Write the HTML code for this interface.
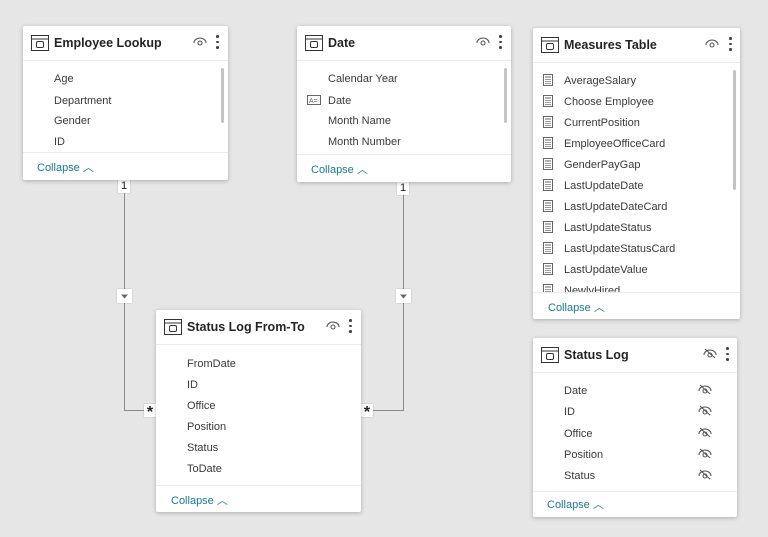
<!DOCTYPE html>
<html><head><meta charset="utf-8"><style>
body{margin:0;width:768px;height:537px;background:#e6e6e6;font-family:"Liberation Sans",sans-serif;position:relative;overflow:hidden}
.card{position:absolute;background:#fff;box-shadow:0 1px 4px rgba(0,0,0,.25);border-radius:2px}
.hd{position:absolute;left:0;right:0;top:0;height:34px;border-bottom:1px solid #ececec}
.ti{position:absolute;left:31px;top:10px;font-size:12.5px;font-weight:bold;color:#252423}
.ic{position:absolute;left:8px;top:9px}
.eye{position:absolute;top:11px}
.dots{position:absolute;top:9px;width:3px}
.dots i{display:block;width:2.5px;height:2.5px;background:#444;border-radius:50%;margin-bottom:3px}
.r{position:absolute;font-size:11px;color:#3a3a3a;margin-top:1px}
.ft{position:absolute;left:0;right:0;border-top:1px solid #ececec}
.col{position:absolute;font-size:11px;color:#1b7b8c}
.sb{position:absolute;width:3px;background:#c4c4c4;border-radius:2px}
.ln{position:absolute;background:#8a8a8a}
.lb{position:absolute;background:#fff;font-size:11px;text-align:center;color:#222;box-shadow:0 0 1px #999}
</style></head><body>

<div class="ln" style="left:124px;top:180px;width:1px;height:230px"></div>
<div class="ln" style="left:124px;top:410px;width:32px;height:1px"></div>
<div class="lb" style="left:118px;top:180px;width:12px;height:13px;line-height:13px">1</div>
<div class="lb" style="left:117px;top:289px;width:15px;height:14px"><svg width="15" height="14"><path d="M4 5.5h7l-3.5 4z" fill="#666"/></svg></div>
<div class="lb" style="left:144px;top:404px;width:12px;height:13px;line-height:17px;font-weight:bold;font-size:16px">*</div>

<div class="ln" style="left:403px;top:182px;width:1px;height:228px"></div>
<div class="ln" style="left:361px;top:410px;width:43px;height:1px"></div>
<div class="lb" style="left:397px;top:182px;width:12px;height:13px;line-height:13px">1</div>
<div class="lb" style="left:396px;top:289px;width:15px;height:14px"><svg width="15" height="14"><path d="M4 5.5h7l-3.5 4z" fill="#666"/></svg></div>
<div class="lb" style="left:361px;top:404px;width:12px;height:13px;line-height:17px;font-weight:bold;font-size:16px">*</div>

<svg width="0" height="0" style="position:absolute"><defs>
<g id="tbl"><rect x="0.5" y="0.5" width="17" height="15" fill="none" stroke="#333"/><line x1="0.5" y1="4" x2="17.5" y2="4" stroke="#333"/><rect x="5.5" y="6.5" width="7" height="6" rx="1.5" fill="none" stroke="#333"/></g>
<g id="eye"><path d="M1 8a6 5 0 0 1 12 0" fill="none" stroke="#555" stroke-width="1.1"/><circle cx="7" cy="8" r="2" fill="none" stroke="#555" stroke-width="1.1"/></g>
<g id="heye"><path d="M1 8a6 5 0 0 1 12 0" fill="none" stroke="#555" stroke-width="1.1"/><circle cx="7" cy="8" r="2" fill="none" stroke="#555" stroke-width="1.1"/><line x1="2" y1="2" x2="12" y2="11" stroke="#555" stroke-width="1.1"/></g>
<g id="calc"><rect x="0.5" y="0.5" width="9" height="11" fill="none" stroke="#666"/><line x1="2" y1="3" x2="8" y2="3" stroke="#666"/><path d="M2 5.5h6M2 7.5h6M2 9.5h6" stroke="#999"/></g>
</defs></svg>

<div class="card" style="left:23px;top:26px;width:205px;height:154px">
<div class="hd"></div>
<svg class="ic" width="18" height="16"><use href="#tbl"/></svg>
<div class="ti">Employee Lookup</div>
<svg class="eye" style="left:170px" width="14" height="10"><use href="#eye" y="-2"/></svg>
<div class="dots" style="left:193px"><i></i><i></i><i></i></div>
<div class="r" style="left:31px;top:46px">Age</div>
<div class="r" style="left:31px;top:68px">Department</div>
<div class="r" style="left:31px;top:88px">Gender</div>
<div class="r" style="left:31px;top:109px">ID</div>
<div class="sb" style="left:198px;top:42px;height:55px"></div>
<div class="ft" style="top:126px"></div>
<div class="col" style="left:14px;top:133px">Collapse ︿</div>
</div>

<div class="card" style="left:297px;top:26px;width:214px;height:156px">
<div class="hd"></div>
<svg class="ic" width="18" height="16"><use href="#tbl"/></svg>
<div class="ti">Date</div>
<svg class="eye" style="left:179px" width="14" height="10"><use href="#eye" y="-2"/></svg>
<div class="dots" style="left:202px"><i></i><i></i><i></i></div>
<div class="r" style="left:31px;top:46px">Calendar Year</div>
<svg style="position:absolute;left:10px;top:69px" width="14" height="10"><rect x="0.5" y="0.5" width="13" height="9" fill="none" stroke="#666"/><text x="2" y="8" font-size="7" fill="#666" font-family="Liberation Sans">A=</text></svg>
<div class="r" style="left:31px;top:68px">Date</div>
<div class="r" style="left:31px;top:88px">Month Name</div>
<div class="r" style="left:31px;top:109px">Month Number</div>
<div class="sb" style="left:207px;top:42px;height:55px"></div>
<div class="ft" style="top:128px"></div>
<div class="col" style="left:14px;top:135px">Collapse ︿</div>
</div>

<div class="card" style="left:533px;top:28px;width:207px;height:291px">
<div class="hd"></div>
<svg class="ic" width="18" height="16"><use href="#tbl"/></svg>
<div class="ti">Measures Table</div>
<svg class="eye" style="left:172px" width="14" height="10"><use href="#eye" y="-2"/></svg>
<div class="dots" style="left:196px"><i></i><i></i><i></i></div>
<div style="position:absolute;left:0;right:0;top:35px;height:229px;overflow:hidden">
<svg style="position:absolute;left:10px;top:11px" width="10" height="230"><use href="#calc"/><use href="#calc" y="21"/><use href="#calc" y="42"/><use href="#calc" y="63"/><use href="#calc" y="84"/><use href="#calc" y="105"/><use href="#calc" y="126"/><use href="#calc" y="147"/><use href="#calc" y="168"/><use href="#calc" y="189"/><use href="#calc" y="210"/></svg>
<div class="r" style="left:31px;top:11px">AverageSalary</div>
<div class="r" style="left:31px;top:32px">Choose Employee</div>
<div class="r" style="left:31px;top:53px">CurrentPosition</div>
<div class="r" style="left:31px;top:74px">EmployeeOfficeCard</div>
<div class="r" style="left:31px;top:95px">GenderPayGap</div>
<div class="r" style="left:31px;top:116px">LastUpdateDate</div>
<div class="r" style="left:31px;top:137px">LastUpdateDateCard</div>
<div class="r" style="left:31px;top:158px">LastUpdateStatus</div>
<div class="r" style="left:31px;top:179px">LastUpdateStatusCard</div>
<div class="r" style="left:31px;top:200px">LastUpdateValue</div>
<div class="r" style="left:31px;top:221px">NewlyHired</div>
</div>
<div class="sb" style="left:200px;top:42px;height:120px"></div>
<div class="ft" style="top:264px"></div>
<div class="col" style="left:15px;top:271px">Collapse ︿</div>
</div>

<div class="card" style="left:156px;top:310px;width:205px;height:202px">
<div class="hd"></div>
<svg class="ic" width="18" height="16"><use href="#tbl"/></svg>
<div class="ti">Status Log From-To</div>
<svg class="eye" style="left:170px" width="14" height="10"><use href="#eye" y="-2"/></svg>
<div class="dots" style="left:193px"><i></i><i></i><i></i></div>
<div class="r" style="left:31px;top:47px">FromDate</div>
<div class="r" style="left:31px;top:68px">ID</div>
<div class="r" style="left:31px;top:89px">Office</div>
<div class="r" style="left:31px;top:110px">Position</div>
<div class="r" style="left:31px;top:131px">Status</div>
<div class="r" style="left:31px;top:152px">ToDate</div>
<div class="ft" style="top:175px"></div>
<div class="col" style="left:15px;top:182px">Collapse ︿</div>
</div>

<div class="card" style="left:533px;top:338px;width:204px;height:179px">
<div class="hd"></div>
<svg class="ic" width="18" height="16"><use href="#tbl"/></svg>
<div class="ti">Status Log</div>
<svg class="eye" style="left:170px;top:10px" width="14" height="12"><use href="#heye" y="-1"/></svg>
<div class="dots" style="left:193px"><i></i><i></i><i></i></div>
<div class="r" style="left:31px;top:46px">Date</div>
<div class="r" style="left:31px;top:67px">ID</div>
<div class="r" style="left:31px;top:89px">Office</div>
<div class="r" style="left:31px;top:110px">Position</div>
<div class="r" style="left:31px;top:131px">Status</div>
<svg style="position:absolute;left:165px;top:46px" width="14" height="100"><use href="#heye" y="-1"/><use href="#heye" y="20"/><use href="#heye" y="42"/><use href="#heye" y="63"/><use href="#heye" y="84"/></svg>
<div class="ft" style="top:153px"></div>
<div class="col" style="left:14px;top:158px">Collapse ︿</div>
</div>

</body></html>
